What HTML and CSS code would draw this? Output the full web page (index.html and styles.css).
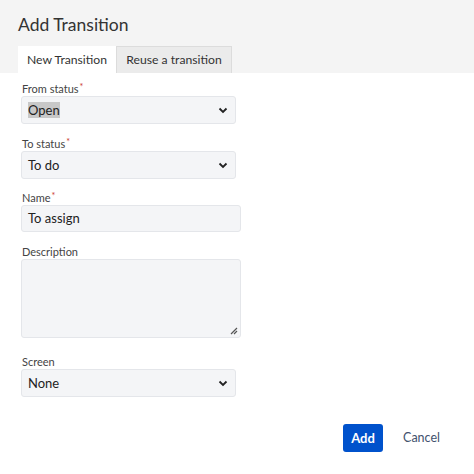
FILE: index.html
```html
<!DOCTYPE html>
<html>
<head>
<meta charset="utf-8">
<link rel="stylesheet" href="styles.css">
</head>
<body>
<div class="header">
  <h1 class="title">Add Transition</h1>
  <div class="tabs">
    <div class="tab active">New Transition</div>
    <div class="tab reuse">Reuse a transition</div>
  </div>
</div>
<form class="form">
  <div class="field f-from">
    <div class="label">From status<span class="req">*</span></div>
    <div class="select"><span class="hl">Open</span><svg class="chev" width="10" height="7" viewBox="0 0 10 7"><path d="M1.5 1.5 L5 5 L8.5 1.5" fill="none" stroke="#222" stroke-width="1.8"/></svg></div>
  </div>
  <div class="field f-to">
    <div class="label">To status<span class="req">*</span></div>
    <div class="select"><span>To do</span><svg class="chev" width="10" height="7" viewBox="0 0 10 7"><path d="M1.5 1.5 L5 5 L8.5 1.5" fill="none" stroke="#222" stroke-width="1.8"/></svg></div>
  </div>
  <div class="field f-name">
    <div class="label">Name<span class="req">*</span></div>
    <div class="input">To assign</div>
  </div>
  <div class="field f-desc">
    <div class="label">Description</div>
    <div class="textarea"><svg class="grip" width="8" height="8" viewBox="0 0 8 8"><path d="M7 1 L1 7 M7 4 L4 7" stroke="#555" stroke-width="1.2"/></svg></div>
  </div>
  <div class="field f-screen">
    <div class="label">Screen</div>
    <div class="select"><span>None</span><svg class="chev" width="10" height="7" viewBox="0 0 10 7"><path d="M1.5 1.5 L5 5 L8.5 1.5" fill="none" stroke="#222" stroke-width="1.8"/></svg></div>
  </div>
  <div class="actions">
    <div class="btn-primary">Add</div>
    <div class="btn-link">Cancel</div>
  </div>
</form>
</body>
</html>
```
FILE: styles.css
```css
* { box-sizing: border-box; }
html, body { margin: 0; padding: 0; background: #fff; }
body {
  font-family: Lato, "Open Sans", sans-serif;
  color: #172b4d;
  width: 474px;
  height: 474px;
  overflow: hidden;
}
.header {
  background: #f4f4f4;
  padding: 13px 0 0 18px;
  height: 73px;
}
.title {
  margin: 0;
  font-weight: 400;
  font-size: 17.5px;
  line-height: 24px;
  color: #333;
  height: 33px;
}
.tabs {
  display: flex;
  height: 27px;
}
.tab {
  font-size: 12.2px;
  line-height: 26px;
  color: #333;
  background: #ebebeb;
  border: 1px solid #dcdcdc;
  border-bottom: none;
  height: 27px;
  white-space: nowrap;
  text-align: center;
}
.tab.active {
  background: #fff;
  border-color: #fff;
  width: 98px;
}
.tab.reuse { width: 116px; }
.form {
  padding: 9px 0 0 21px;
}
.label {
  font-size: 11px;
  line-height: 14px;
  color: #444;
  padding-left: 1px;
}
.req { color: #c9372c; font-size: 9px; vertical-align: top; position: relative; top: -2px; margin-left: 1px; }
.select, .input, .textarea {
  background: #f4f5f7;
  border: 1px solid #e4e6ea;
  border-radius: 3px;
  font-size: 13px;
  color: #222;
}
.select {
  width: 215px;
  height: 28px;
  display: flex;
  align-items: center;
  justify-content: space-between;
  padding: 0 7px 0 6px;
}
.select .hl { background: #c8c8c8; }
.input {
  width: 220px;
  height: 27px;
  line-height: 25px;
  padding: 0 6px;
}
.textarea {
  width: 220px;
  height: 79px;
  display: flex;
  align-items: flex-end;
  justify-content: flex-end;
  padding: 0 2px 2px 0;
}
.f-to { margin-top: 13px; }
.f-name { margin-top: 12px; }
.f-desc { margin-top: 13px; }
.f-screen { margin-top: 17px; }
.actions {
  display: flex;
  justify-content: flex-end;
  align-items: center;
  margin-top: 27px;
  padding-right: 34px;
  gap: 20px;
}
.btn-primary {
  background: #0052cc;
  color: #fff;
  font-weight: 700;
  font-size: 13px;
  width: 40px;
  height: 28px;
  line-height: 28px;
  text-align: center;
  border-radius: 3px;
}
.btn-link {
  color: #42526e;
  font-size: 12.5px;
  line-height: 28px;
}
```
